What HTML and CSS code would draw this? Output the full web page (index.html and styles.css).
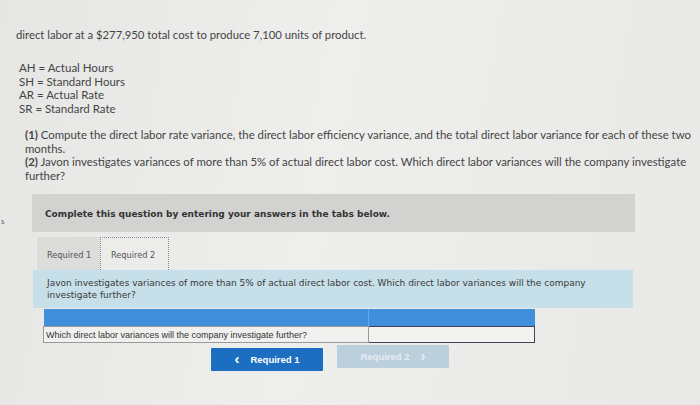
FILE: index.html
```html
<!DOCTYPE html>
<html lang="en">
<head>
    <meta charset="UTF-8">
    <meta name="viewport" content="width=device-width, initial-scale=1.0">
    <title>Direct labor variances</title>
    <link rel="stylesheet" href="styles.css">
</head>
<body>
    <div class="page">
        <p class="lead">direct labor at a $277,950 total cost to produce 7,100 units of product.</p>

        <ul class="defs">
            <li>AH = Actual Hours</li>
            <li>SH = Standard Hours</li>
            <li>AR = Actual Rate</li>
            <li>SR = Standard Rate</li>
        </ul>

        <div class="tasks">
            <p><span class="num">(1)</span> <span>Compute the direct labor rate variance, the direct labor efficiency variance, and the total direct labor variance for each of these two months.</span></p>
            <p><span class="num">(2)</span> <span>Javon investigates variances of more than 5% of actual direct labor cost. Which direct labor variances will the company investigate further?</span></p>
        </div>

        <div class="side-mark">s</div>

        <div class="notice">Complete this question by entering your answers in the tabs below.</div>

        <div class="tabs">
            <div class="tab">Required 1</div>
            <div class="tab active">Required 2</div>
        </div>

        <div class="info">Javon investigates variances of more than 5% of actual direct labor cost. Which direct labor variances will the company investigate further?</div>

        <table class="answer">
            <tr class="head">
                <th></th>
                <th></th>
            </tr>
            <tr>
                <td>Which direct labor variances will the company investigate further?</td>
                <td class="cell"></td>
            </tr>
        </table>

        <div class="nav">
            <button class="btn prev"><span class="chev">&lsaquo;</span>Required 1</button>
            <button class="btn next" disabled>Required 2<span class="chev after">&rsaquo;</span></button>
        </div>
    </div>
</body>
</html>
```

FILE: styles.css
```css
body {
    margin: 0;
    background-color: #e9e9e8;
    font-family: 'Lato', sans-serif;
    color: #444;
    overflow: hidden;
}
.page {
    position: relative;
    width: 700px;
    height: 405px;
    padding-top: 28px;
    box-sizing: border-box;
    background: linear-gradient(100deg, #e6e6e5 0%, #eeeeed 45%, #e8e8e7 100%);
}
.lead {
    margin: 0 0 0 16px;
    font-size: 11.3px;
}
.defs {
    list-style: none;
    margin: 20px 0 0 19px;
    padding: 0;
    font-size: 11.5px;
    line-height: 13.5px;
}
.tasks {
    margin: 13px 0 0 25px;
    width: 677px;
    font-size: 11.4px;
    line-height: 13.5px;
}
.tasks p {
    margin: 0;
}
.num {
    font-weight: bold;
}
.side-mark {
    position: absolute;
    left: 1px;
    top: 216px;
    font-size: 8px;
    color: #666;
}
.notice {
    margin: 12px 0 0 32px;
    width: 603px;
    height: 38px;
    box-sizing: border-box;
    padding: 15px 0 0 13px;
    background-color: #d2d2d1;
    font-family: 'DejaVu Sans', sans-serif;
    font-size: 9px;
    font-weight: bold;
    color: #333;
}
.tabs {
    display: flex;
    margin: 5px 0 0 37px;
}
.tab {
    width: 63px;
    height: 33px;
    box-sizing: border-box;
    padding-top: 13px;
    padding-left: 10px;
    background-color: #dcdcdb;
    font-family: 'DejaVu Sans', sans-serif;
    font-size: 8.2px;
    color: #555;
}
.tab.active {
    width: 69px;
    background-color: #ececeb;
    border: 1px dotted #888;
    border-bottom: none;
    padding-top: 12px;
}
.info {
    margin: 0 0 0 33px;
    width: 600px;
    height: 38px;
    box-sizing: border-box;
    padding: 8px 40px 0 14px;
    background-color: #c6dfe8;
    font-family: 'DejaVu Sans', sans-serif;
    font-size: 9px;
    line-height: 11.5px;
    color: #3a3a3a;
}
.answer {
    margin: 1px 0 0 43px;
    width: 492px;
    border-collapse: collapse;
    font-family: 'Liberation Sans', sans-serif;
    font-size: 9px;
    color: #333;
}
.answer .head th {
    height: 17px;
    padding: 0;
    background-color: #3f8fdc;
}
.answer .head th + th {
    border-left: 1px solid #6aa8e4;
}
.answer td {
    height: 15px;
    padding: 0 2px;
    background-color: #f0f0ef;
    border: 1px solid #999;
}
.answer th:first-child,
.answer td:first-child {
    width: 320px;
}
.answer .cell {
    border: 1px solid #445;
    background-color: #f2f2f1;
}
.nav {
    display: flex;
    gap: 14px;
    margin: 5px 0 0 211px;
}
.btn {
    display: flex;
    align-items: center;
    justify-content: center;
    width: 112px;
    height: 23px;
    border: none;
    border-radius: 1px;
    font-family: 'Liberation Sans', sans-serif;
    font-size: 9.5px;
    font-weight: bold;
}
.chev {
    font-size: 15px;
    margin-right: 11px;
    margin-top: -2px;
}
.chev.after {
    margin-right: 0;
    margin-left: 11px;
}
.prev {
    background-color: #1c6ec1;
    color: #fff;
}
.next {
    margin-top: -3px;
    background-color: #bccfdc;
    color: #e4edf3;
}
```
